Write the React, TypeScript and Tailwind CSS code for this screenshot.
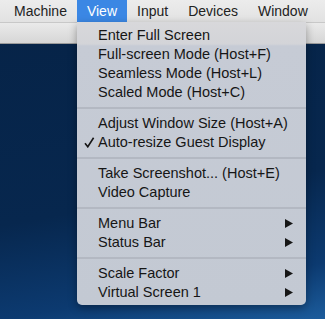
import React from "react"

type Item = { label: string; checked?: boolean; submenu?: boolean }

const groups: Item[][] = [
  [
    { label: "Enter Full Screen" },
    { label: "Full-screen Mode (Host+F)" },
    { label: "Seamless Mode (Host+L)" },
    { label: "Scaled Mode (Host+C)" },
  ],
  [
    { label: "Adjust Window Size (Host+A)" },
    { label: "Auto-resize Guest Display", checked: true },
  ],
  [{ label: "Take Screenshot... (Host+E)" }, { label: "Video Capture" }],
  [
    { label: "Menu Bar", submenu: true },
    { label: "Status Bar", submenu: true },
  ],
  [
    { label: "Scale Factor", submenu: true },
    { label: "Virtual Screen 1", submenu: true },
  ],
]

const topMenus = ["Machine", "View", "Input", "Devices", "Window"]

const Check = () => (
  <svg width="11" height="11" viewBox="0 0 11 11" className="ml-[7px]">
    <path d="M1 6.2 L3.8 9.8 L9.6 0.8" fill="none" stroke="#161616" strokeWidth="1.6" />
  </svg>
)

const Arrow = () => (
  <svg width="8" height="9" viewBox="0 0 8 9" className="ml-auto mr-[13px]">
    <polygon points="0,0 8,4.5 0,9" fill="#161616" />
  </svg>
)

export default function App() {
  return (
    <div
      className="relative w-[325px] h-[319px] overflow-hidden bg-[linear-gradient(170deg,#062347_0%,#07274e_60%,#0c3a70_85%,#1c5c9c_100%)]"
      style={{ fontFamily: '"Liberation Sans", Arial, sans-serif' }}
    >
      {/* menu bar */}
      <div className="flex h-[22px] pl-[4px] bg-[linear-gradient(#ececec,#e2e2e2)] text-[14px] text-[#222]">
        {topMenus.map((m) => (
          <div
            key={m}
            className={
              m === "View"
                ? "flex items-center px-[10px] h-full bg-[#3b87e4] text-white"
                : "flex items-center px-[10px] h-full"
            }
          >
            {m}
          </div>
        ))}
      </div>

      {/* window title strip */}
      <div className="h-[22px] border-t border-[#c8c8c8] bg-[linear-gradient(#eaeaea,#d6d6d6)] border-b border-b-[#9a9a9a]" />

      {/* dropdown */}
      <div className="absolute left-[77px] top-[22px] w-[229px] pt-[4px] pb-[3px] rounded-b-[5px] shadow-[0_3px_8px_rgba(0,0,0,0.35)] bg-[linear-gradient(#d8d8db_0px,#d3d4d8_22px,#c6cbd5_24px,#c3c9d3_100%)] text-[14.5px] text-[#161616]">
        {groups.map((g, gi) => (
          <div key={gi}>
            {gi > 0 && (
              <div className="h-[12px] flex items-center">
                <div className="h-[2px] w-full bg-[#b3b8c2]" />
              </div>
            )}
            {g.map((it) => (
              <div key={it.label} className="h-[19px] flex items-center leading-none">
                <div className="w-[21px] flex items-center">{it.checked && <Check />}</div>
                {it.label}
                {it.submenu && <Arrow />}
              </div>
            ))}
          </div>
        ))}
      </div>
    </div>
  )
}
